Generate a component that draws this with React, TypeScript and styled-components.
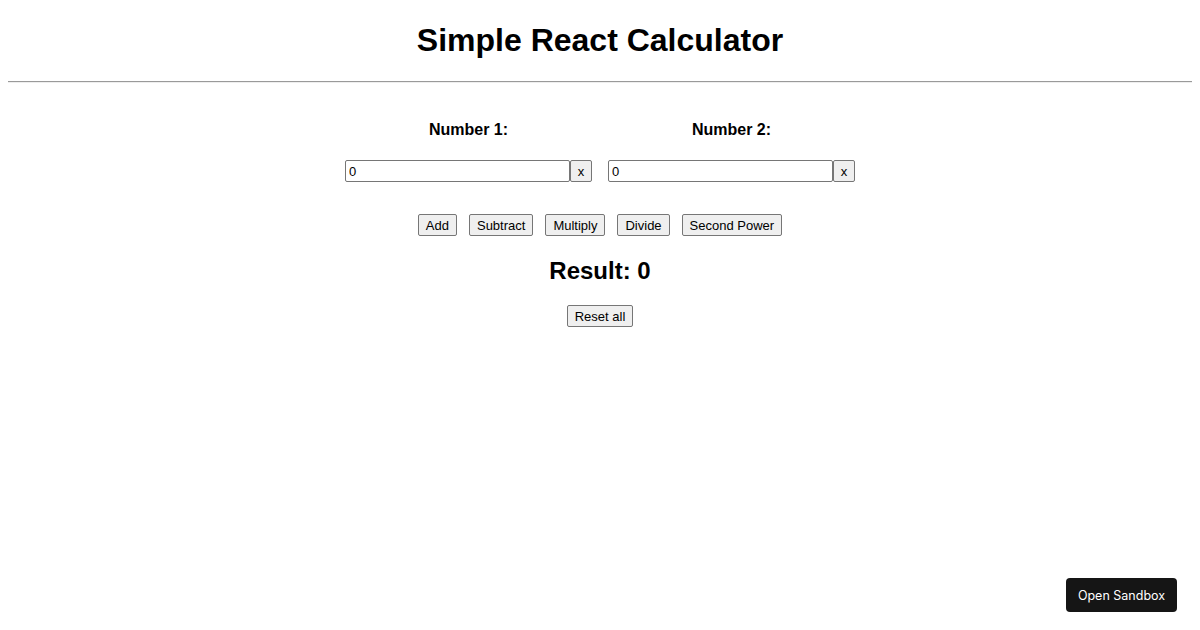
import React, { useState } from 'react';
import styled, { createGlobalStyle } from 'styled-components';

const GlobalStyle = createGlobalStyle`
  body {
    margin: 8px;
    font-family: "Liberation Sans", Arial, sans-serif;
    color: #000;
    background: #fff;
  }
`;

const Title = styled.h1`
  margin: 14.44px 0 21.44px;
  font-size: 32px;
  font-weight: bold;
  line-height: 37px;
  text-align: center;
`;

const Divider = styled.hr`
  margin: 0;
  height: 0;
  border: none;
  border-top: 1px solid #9a9a9a;
  border-bottom: 1px solid #eeeeee;
`;

const Inputs = styled.div`
  display: flex;
  justify-content: center;
  gap: 16px;
  margin-top: 17px;
`;

const Field = styled.div`
  display: flex;
  flex-direction: column;
  align-items: center;
`;

const Label = styled.h4`
  margin: 21.28px 0;
  font-size: 16px;
  font-weight: bold;
  line-height: 18px;
`;

const InputRow = styled.div`
  display: flex;
`;

const NumberInput = styled.input`
  box-sizing: border-box;
  width: 225px;
  height: 22px;
  padding: 1px 3px;
  border: 1px solid #767676;
  border-radius: 2px;
  font-family: "Liberation Sans", Arial, sans-serif;
  font-size: 13px;
  color: #000;
`;

const Button = styled.button<{ $square?: boolean }>`
  box-sizing: border-box;
  height: 22px;
  padding: ${(p) => (p.$square ? '1px 0' : '1px 7px')};
  width: ${(p) => (p.$square ? '22px' : 'auto')};
  border: 1px solid #767676;
  border-radius: 2px;
  background: #efefef;
  font-family: "Liberation Sans", Arial, sans-serif;
  font-size: 13px;
  color: #000;
  cursor: pointer;
`;

const Operations = styled.div`
  display: flex;
  justify-content: center;
  gap: 12px;
  margin-top: 32px;
`;

const Result = styled.h2`
  margin: 21px 0 20px;
  font-size: 24px;
  font-weight: bold;
  text-align: center;
  line-height: 28px;
`;

const ResetRow = styled.div`
  display: flex;
  justify-content: center;
`;

const SandboxButton = styled.button`
  position: fixed;
  right: 23px;
  bottom: 18px;
  width: 111px;
  height: 34px;
  border: none;
  border-radius: 4px;
  background: #151515;
  color: #fff;
  font-family: Inter, "Liberation Sans", sans-serif;
  font-size: 12.5px;
  cursor: pointer;
`;

const App = (): JSX.Element => {
  const [a, setA] = useState('0');
  const [b, setB] = useState('0');
  const [result, setResult] = useState(0);

  const x = Number(a) || 0;
  const y = Number(b) || 0;

  return (
    <>
      <GlobalStyle />
      <Title>Simple React Calculator</Title>
      <Divider />

      <Inputs>
        <Field>
          <Label>Number 1:</Label>
          <InputRow>
            <NumberInput value={a} onChange={(e) => setA(e.target.value)} />
            <Button $square onClick={() => setA('0')}>x</Button>
          </InputRow>
        </Field>
        <Field>
          <Label>Number 2:</Label>
          <InputRow>
            <NumberInput value={b} onChange={(e) => setB(e.target.value)} />
            <Button $square onClick={() => setB('0')}>x</Button>
          </InputRow>
        </Field>
      </Inputs>

      <Operations>
        <Button onClick={() => setResult(x + y)}>Add</Button>
        <Button onClick={() => setResult(x - y)}>Subtract</Button>
        <Button onClick={() => setResult(x * y)}>Multiply</Button>
        <Button onClick={() => setResult(y ? x / y : 0)}>Divide</Button>
        <Button onClick={() => setResult(x * x)}>Second Power</Button>
      </Operations>

      <Result>Result: {result}</Result>

      <ResetRow>
        <Button
          onClick={() => {
            setA('0');
            setB('0');
            setResult(0);
          }}
        >
          Reset all
        </Button>
      </ResetRow>

      <SandboxButton>Open Sandbox</SandboxButton>
    </>
  );
};

export default App;
